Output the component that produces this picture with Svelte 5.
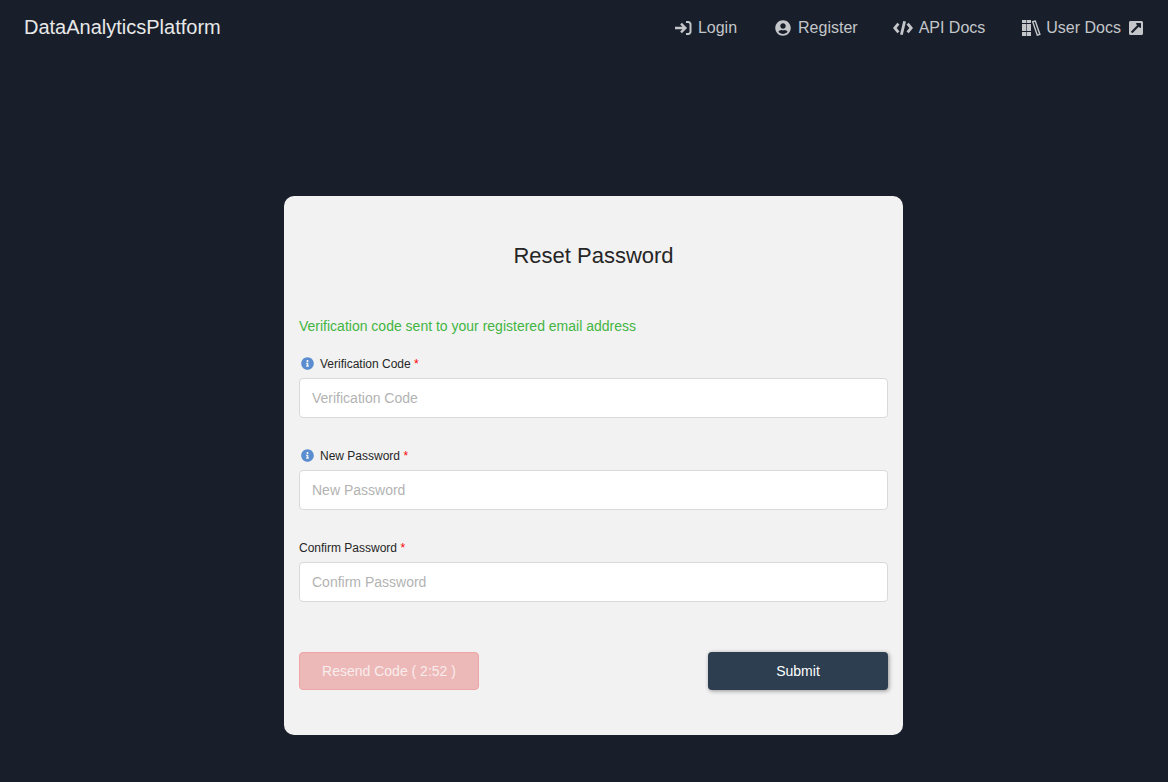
<script lang="ts">
  const infoPath =
    "M256 8C119.043 8 8 119.083 8 256c0 136.997 111.043 248 248 248s248-111.003 248-248C504 119.083 392.957 8 256 8zm0 110c23.196 0 42 18.804 42 42s-18.804 42-42 42-42-18.804-42-42 18.804-42 42-42zm56 254c0 6.627-5.373 12-12 12h-88c-6.627 0-12-5.373-12-12v-24c0-6.627 5.373-12 12-12h12v-64h-12c-6.627 0-12-5.373-12-12v-24c0-6.627 5.373-12 12-12h64c6.627 0 12 5.373 12 12v100h12c6.627 0 12 5.373 12 12v24z";

  const fields = [
    { label: "Verification Code", info: true },
    { label: "New Password", info: true },
    { label: "Confirm Password", info: false },
  ];
</script>

<div class="page">
  <nav class="nav">
    <a class="brand" href="#home">DataAnalyticsPlatform</a>
    <div class="links">
      <a class="link login" href="#login">
        <svg class="icon" width="18" height="16" viewBox="0 0 18 16" fill="none" stroke="currentColor" stroke-width="2.4">
          <path d="M1 8h9.5M7 3.6 11.4 8 7 12.4" />
          <path d="M12 2h2.2A2.3 2.3 0 0 1 16.5 4.3v7.4A2.3 2.3 0 0 1 14.2 14H12" stroke-width="2" />
        </svg>
        Login
      </a>
      <a class="link register" href="#register">
        <svg class="icon" width="16" height="16" viewBox="0 0 496 512" fill="currentColor">
          <path d="M248 8C111 8 0 119 0 256s111 248 248 248 248-111 248-248S385 8 248 8zm0 96c48.6 0 88 39.4 88 88s-39.4 88-88 88-88-39.4-88-88 39.4-88 88-88zm0 344c-58.7 0-111.3-26.6-146.5-68.2 18.8-35.4 55.6-59.8 98.5-59.8 2.4 0 4.8.4 7.1 1.1 13 4.2 26.6 6.9 40.9 6.9 14.3 0 28-2.7 40.9-6.9 2.3-.7 4.7-1.1 7.1-1.1 42.9 0 79.7 24.4 98.5 59.8C359.3 421.4 306.7 448 248 448z" />
        </svg>
        Register
      </a>
      <a class="link" href="#api">
        <svg class="icon" width="20" height="16" viewBox="0 0 20 16" fill="none" stroke="currentColor" stroke-width="2.8">
          <path d="M5.4 3.6 1.8 8l3.6 4.4M14.6 3.6l3.6 4.4-3.6 4.4M11.6 1.2 8.4 14.8" />
        </svg>
        API Docs
      </a>
      <a class="link" href="#docs">
        <svg class="icon docs" width="20" height="16" viewBox="0 0 20 16" fill="currentColor">
          <path d="M1 0h4.2v3H1zM1 4h4.2v7H1zM1 12h4.2v4H1zM5.8 0H10v3H5.8zM5.8 4H10v7H5.8zM5.8 12H10v4H5.8z" />
          <path d="M11.7 1.7 14.3 1l4.6 13.4-2.6.8z" fill="none" stroke="currentColor" stroke-width="1.4" />
        </svg>
        User Docs
        <svg class="ext" width="14" height="16" viewBox="0 0 448 512" fill="currentColor">
          <path d="M448 80v352c0 26.51-21.49 48-48 48H48c-26.51 0-48-21.49-48-48V80c0-26.51 21.49-48 48-48h352c26.51 0 48 21.49 48 48zm-88 16H248.029c-21.313 0-32.08 25.861-16.971 40.971l31.984 31.987L67.515 364.485c-4.686 4.686-4.686 12.284 0 16.971l31.029 31.029c4.687 4.686 12.285 4.686 16.971 0l195.526-195.526 31.988 31.991C357.058 263.977 384 253.425 384 231.979V120c0-13.255-10.745-24-24-24z" />
        </svg>
      </a>
    </div>
  </nav>

  <main class="main">
    <form class="card">
      <h2 class="title">Reset Password</h2>
      <p class="notice">Verification code sent to your registered email address</p>

      {#each fields as field}
        <div class="field">
          <label class="label" for={field.label}>
            {#if field.info}
              <svg class="info" width="13" height="13" viewBox="0 0 512 512" fill="#5a8dd0">
                <path d={infoPath} />
              </svg>
            {/if}
            <span>{field.label} <span class="req">*</span></span>
          </label>
          <input class="input" id={field.label} placeholder={field.label} />
        </div>
      {/each}

      <div class="actions">
        <button class="resend" type="button" disabled>Resend Code ( 2:52 )</button>
        <button class="submit" type="button">Submit</button>
      </div>
    </form>
  </main>
</div>

<style>
  :global(body) {
    background: #181f2b;
    font-family: "Liberation Sans", Arial, sans-serif;
  }
  .page {
    min-height: 782px;
    background: #181f2b;
  }
  .nav {
    display: flex;
    align-items: center;
    justify-content: space-between;
    height: 56px;
    padding: 0 25px 0 24px;
  }
  .brand {
    margin-top: -2px;
    color: #e8e8e8;
    font-size: 20px;
    text-decoration: none;
  }
  .links {
    display: flex;
    align-items: center;
    gap: 36px;
  }
  .link {
    display: flex;
    align-items: center;
    color: #c4c6c9;
    font-size: 16px;
    text-decoration: none;
  }
  .login {
    margin-right: 2px;
  }
  .register {
    margin-right: -1px;
  }
  .register .icon {
    margin-right: 7px;
  }
  .icon {
    margin-right: 6px;
  }
  .icon.docs {
    margin-right: 5px;
  }
  .ext {
    margin-left: 8px;
  }
  .main {
    display: flex;
    justify-content: center;
    padding: 140px 0 0 19px;
  }
  .card {
    box-sizing: border-box;
    width: 619px;
    height: 539px;
    padding: 15px;
    background: #f2f2f2;
    border-radius: 10px;
  }
  .title {
    margin: 30px 0 0;
    color: #262626;
    font-size: 22px;
    font-weight: 400;
    line-height: 30px;
    text-align: center;
  }
  .notice {
    margin: 45px 0 0;
    color: #43b543;
    font-size: 14px;
    line-height: 20px;
  }
  .field {
    margin-top: 18px;
  }
  .field + .field {
    margin-top: 28px;
  }
  .label {
    display: flex;
    align-items: center;
    height: 20px;
    margin-bottom: 4px;
    color: #262626;
    font-size: 12px;
    white-space: pre;
  }
  .info {
    margin: 0 6px 2px 2px;
  }
  .req {
    color: #f00;
  }
  .input {
    display: block;
    box-sizing: border-box;
    width: 100%;
    height: 40px;
    padding: 0 12px;
    border: 1px solid #d9d9d9;
    border-radius: 4px;
    background: #fff;
    font: 14px "Liberation Sans", Arial, sans-serif;
  }
  .input::placeholder {
    color: #b3b3b3;
    opacity: 1;
  }
  .actions {
    display: flex;
    justify-content: space-between;
    margin-top: 50px;
  }
  .resend,
  .submit {
    height: 38px;
    border-radius: 4px;
    font: 14px "Liberation Sans", Arial, sans-serif;
  }
  .resend {
    width: 180px;
    border: 1px solid #eda5a5;
    background: #edb8b8;
    color: #f8eded;
  }
  .submit {
    width: 180px;
    border: 0;
    background: #2c3e50;
    color: #fff;
    box-shadow: 1px 1px 4px rgba(0, 0, 0, 0.4);
  }
</style>
